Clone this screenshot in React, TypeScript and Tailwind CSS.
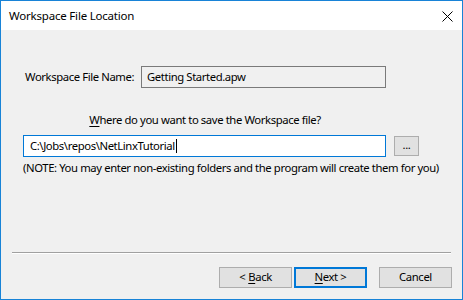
import React from "react";

const font = { fontFamily: '"Segoe UI", "Noto Sans", Lato, sans-serif' };

const App: React.FC = () => {
  return (
    <div
      className="w-[463px] h-[300px] border border-[#1883d7] flex flex-col bg-[#f0f0f0] text-[11.3px] tracking-[-0.4px] text-black"
      style={font}
    >
      {/* title bar */}
      <div className="h-[29px] bg-white flex items-center justify-between pl-[8px] pr-[9px] shrink-0">
        <span className="text-[11.5px] tracking-[-0.2px] leading-none">Workspace File Location</span>
        <svg width="11" height="11" viewBox="0 0 11 11" className="mt-[1px]">
          <path d="M0.5 0.5 L10.5 10.5 M10.5 0.5 L0.5 10.5" stroke="#000" strokeWidth="1" />
        </svg>
      </div>

      <div className="flex-1 flex flex-col">
        {/* workspace name */}
        <div className="flex items-center mt-[36px] pl-[24px]">
          <span className="w-[116px] whitespace-nowrap">Workspace File Name:</span>
          <div className="w-[245px] h-[22px] border border-[#7a7a7a] flex items-center pl-[5px]">
            Getting Started.apw
          </div>
        </div>

        {/* question */}
        <div className="mt-[24px] pl-[22px] w-[386px] text-center leading-[16px]">
          <span className="underline underline-offset-2">W</span>here do you want to save the Workspace file?
        </div>

        {/* path input */}
        <div className="flex items-center mt-[7px] pl-[22px]">
          <div className="w-[363px] h-[22px] border border-[#0078d7] bg-white flex items-center pl-[6px]">
            <span>C:\Jobs\repos\NetLinxTutorial</span>
            <span className="w-[1px] h-[14px] bg-black ml-[1px]" />
          </div>
          <button className="ml-[8px] w-[25px] h-[20px] bg-[#e1e1e1] border border-[#adadad] flex items-center justify-center leading-none pb-[3px]">
            ...
          </button>
        </div>

        {/* note */}
        <div className="mt-[3px] pl-[22px] leading-[16px] whitespace-nowrap">
          (NOTE: You may enter non-existing folders and the program will create them for you)
        </div>

        <div className="flex-1" />

        {/* separator */}
        <div className="mx-[11px] h-[2px] border-t border-[#a0a0a0] border-b border-b-white" />

        {/* buttons */}
        <div className="flex justify-end gap-[2px] mt-[13px] mb-[11px] pr-[10px]">
          <button className="w-[73px] h-[21px] bg-[#e1e1e1] border border-[#adadad] flex items-center justify-center">
            &lt; <span className="underline underline-offset-2 ml-[3px]">B</span>ack
          </button>
          <button className="w-[73px] h-[21px] bg-[#e1e1e1] border-2 border-[#0078d7] flex items-center justify-center">
            <span className="underline underline-offset-2">N</span>ext &gt;
          </button>
          <button className="ml-[10px] w-[73px] h-[21px] bg-[#e1e1e1] border border-[#adadad] flex items-center justify-center">
            Cancel
          </button>
        </div>
      </div>
    </div>
  );
};

export default App;
